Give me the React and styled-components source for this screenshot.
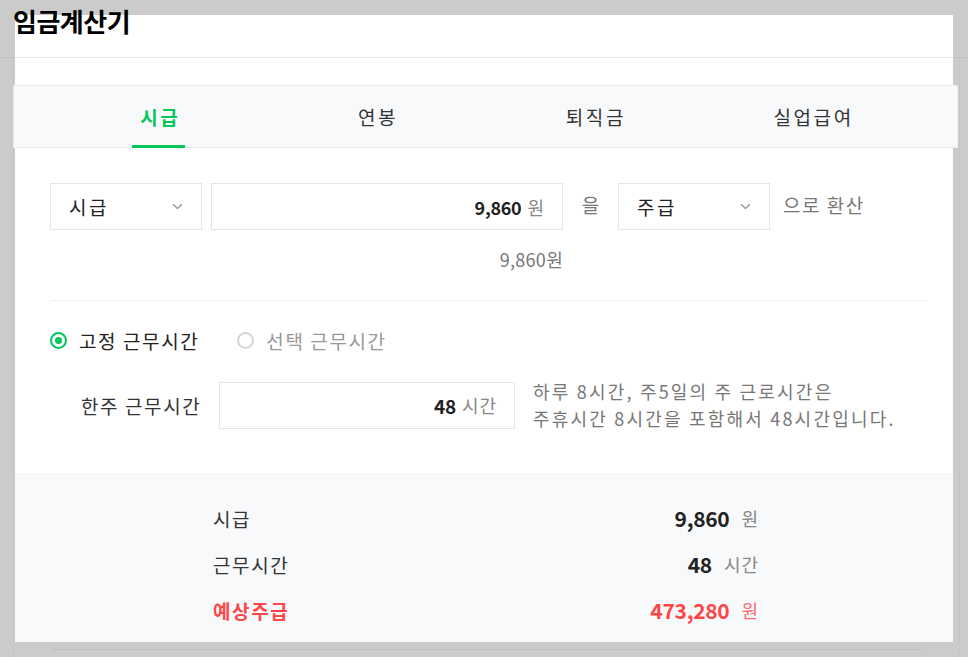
import React from "react";
import styled, { createGlobalStyle } from "styled-components";

const Global = createGlobalStyle`
  html, body { margin: 0; padding: 0; }
  body {
    background: #cbcbcb;
    font-family: "Noto Sans CJK KR", "Noto Sans", sans-serif;
    color: #222;
  }
  * { box-sizing: border-box; }
`;

const Page = styled.div`
  position: relative;
  width: 968px;
  height: 657px;
  overflow: hidden;
  background: #cbcbcb;
`;

const PageHeader = styled.header`
  height: 58px;
  border-bottom: 1px solid #bfbfbf;
`;

const PageBody = styled.div`
  margin: 0 8px 0 13px;
  height: 599px;
  border-left: 1px solid #c5c5c5;
  border-right: 1px solid #c5c5c5;
  display: flex;
  flex-direction: column;
  justify-content: flex-end;
  padding: 0 38px 7px 38px;
`;

const PageRule = styled.div`
  height: 1px;
  background: #bcbcbc;
`;

const Title = styled.h1`
  position: absolute;
  z-index: 3;
  left: 13px;
  top: 3px;
  margin: 0;
  font-size: 26px;
  font-weight: 700;
  color: #000;
  letter-spacing: -0.5px;
  line-height: 36px;
`;

const Modal = styled.section`
  position: absolute;
  z-index: 2;
  left: 15px;
  top: 15px;
  width: 938px;
  height: 627px;
  background: #fff;
  display: flex;
  flex-direction: column;
`;

const ModalTop = styled.div`
  height: 43px;
  border-bottom: 1px solid #ebebeb;
  flex: none;
`;

const TabBox = styled.nav`
  margin: 27px -5px 0 -2px;
  height: 63px;
  background: #f8f9fb;
  border: 1px solid #e9ebef;
  display: grid;
  grid-template-columns: repeat(4, 1fr);
  padding: 0 36px 0 36px;
  flex: none;
`;

const Tab = styled.div`
  display: flex;
  align-items: center;
  justify-content: center;
  position: relative;
  font-size: 19px;
  letter-spacing: 2.6px;
  color: ${(p) => (p.$active ? "#03c75a" : "#333")};
  font-weight: ${(p) => (p.$active ? 700 : 400)};
`;

const TabLabel = styled.span`
  position: relative;
  padding: 0 5px 0 8px;
  line-height: 61px;
  &::after {
    content: "";
    display: ${(p) => (p.$active ? "block" : "none")};
    position: absolute;
    left: 0;
    right: 0;
    bottom: -1px;
    height: 3px;
    background: #03c75a;
  }
`;

const Form = styled.div`
  padding: 35px 26px 0 35px;
  flex: 1;
`;

const Row = styled.div`
  display: flex;
  align-items: center;
`;

const SelectBox = styled.div`
  width: 152px;
  height: 47px;
  border: 1px solid #e2e5ea;
  display: flex;
  align-items: center;
  justify-content: space-between;
  padding: 0 18px 0 18px;
  font-size: 19px;
  letter-spacing: 2.5px;
  color: #222;
`;

const AmountBox = styled.div`
  width: ${(p) => p.$w}px;
  height: ${(p) => p.$h}px;
  margin-left: ${(p) => p.$ml || 0}px;
  border: 1px solid #e2e5ea;
  display: flex;
  align-items: center;
  justify-content: flex-end;
  padding: 0 17px;
  gap: 6px;
`;

const Num = styled.span`
  font-size: ${(p) => p.$size || 18}px;
  font-weight: 700;
  color: ${(p) => p.$color || "#222"};
  letter-spacing: -0.3px;
`;

const Unit = styled.span`
  font-size: 18px;
  letter-spacing: 1px;
  color: ${(p) => p.$color || "#888"};
`;

const Josa = styled.span`
  width: 55px;
  text-align: center;
  font-size: 19px;
  color: #777;
  align-self: flex-start;
  padding-top: 8px;
`;

const Trail = styled.span`
  margin-left: 13px;
  font-size: 19px;
  letter-spacing: 1.5px;
  color: #777;
  align-self: flex-start;
  padding-top: 8px;
`;

const Converted = styled.div`
  width: 513px;
  margin-top: 16px;
  text-align: right;
  font-size: 18px;
  line-height: 26px;
  color: #777;
  letter-spacing: 0.3px;
`;

const Divider = styled.hr`
  margin: 28px 0 0 0;
  border: 0;
  height: 1px;
  background: #eeeff1;
`;

const RadioRow = styled.div`
  margin-top: 26px;
  display: flex;
  align-items: center;
  height: 26px;
`;

const RadioItem = styled.label`
  display: flex;
  align-items: center;
  gap: 12px;
  margin-right: 38px;
  font-size: 19px;
  letter-spacing: 1.6px;
  color: ${(p) => (p.$on ? "#222" : "#999")};
`;

const RadioDot = styled.span`
  width: 17px;
  height: 17px;
  border-radius: 50%;
  border: 2px solid ${(p) => (p.$on ? "#03c75a" : "#d6d6d6")};
  display: flex;
  align-items: center;
  justify-content: center;
  &::after {
    content: "";
    width: 7px;
    height: 7px;
    border-radius: 50%;
    background: ${(p) => (p.$on ? "#03c75a" : "transparent")};
  }
`;

const HoursRow = styled.div`
  margin-top: 25px;
  display: flex;
  align-items: center;
  padding-left: 31px;
`;

const FieldLabel = styled.span`
  width: 138px;
  font-size: 19px;
  letter-spacing: 1.6px;
  color: #333;
`;

const Desc = styled.p`
  margin: 0 0 0 18px;
  font-size: 18px;
  line-height: 27px;
  color: #777;
  letter-spacing: 2.2px;
`;

const Results = styled.div`
  flex: none;
  height: 168px;
  background: #f8f9fb;
  border-top: 1px solid #eceef2;
  padding: 20px 0 0 198px;
`;

const ResultRow = styled.div`
  width: 546px;
  height: 46px;
  display: flex;
  align-items: center;
  justify-content: space-between;
`;

const ResultLabel = styled.span`
  font-size: 19px;
  letter-spacing: 1.6px;
  color: ${(p) => (p.$red ? "#ff4646" : "#333")};
  font-weight: ${(p) => (p.$red ? 700 : 400)};
`;

const ResultValue = styled.span`
  display: flex;
  align-items: center;
  gap: 12px;
`;

const Chevron = () => (
  <svg width="11" height="7" viewBox="0 0 11 7">
    <polyline points="1,1.2 5.5,5.5 10,1.2" fill="none" stroke="#9a9a9a" strokeWidth="1.4" />
  </svg>
);

export default function App() {
  const tabs = ["시급", "연봉", "퇴직금", "실업급여"];
  return (
    <>
      <Global />
      <Page>
        <PageHeader />
        <PageBody>
          <PageRule />
        </PageBody>
        <Title>임금계산기</Title>
        <Modal>
          <ModalTop />
          <TabBox>
            {tabs.map((t, i) => (
              <Tab key={t} $active={i === 0}>
                <TabLabel $active={i === 0}>{t}</TabLabel>
              </Tab>
            ))}
          </TabBox>
          <Form>
            <Row>
              <SelectBox>
                시급
                <Chevron />
              </SelectBox>
              <AmountBox $w={352} $h={47} $ml={9}>
                <Num>9,860</Num>
                <Unit>원</Unit>
              </AmountBox>
              <Josa>을</Josa>
              <SelectBox>
                주급
                <Chevron />
              </SelectBox>
              <Trail>으로 환산</Trail>
            </Row>
            <Converted>9,860원</Converted>
            <Divider />
            <RadioRow>
              <RadioItem $on>
                <RadioDot $on />
                고정 근무시간
              </RadioItem>
              <RadioItem>
                <RadioDot />
                선택 근무시간
              </RadioItem>
            </RadioRow>
            <HoursRow>
              <FieldLabel>한주 근무시간</FieldLabel>
              <AmountBox $w={296} $h={47}>
                <Num $size={19}>48</Num>
                <Unit>시간</Unit>
              </AmountBox>
              <Desc>
                하루 8시간, 주5일의 주 근로시간은
                <br />
                주휴시간 8시간을 포함해서 48시간입니다.
              </Desc>
            </HoursRow>
          </Form>
          <Results>
            <ResultRow>
              <ResultLabel>시급</ResultLabel>
              <ResultValue>
                <Num $size={21}>9,860</Num>
                <Unit>원</Unit>
              </ResultValue>
            </ResultRow>
            <ResultRow>
              <ResultLabel>근무시간</ResultLabel>
              <ResultValue>
                <Num $size={21}>48</Num>
                <Unit>시간</Unit>
              </ResultValue>
            </ResultRow>
            <ResultRow>
              <ResultLabel $red>예상주급</ResultLabel>
              <ResultValue>
                <Num $size={21} $color="#ff4646">473,280</Num>
                <Unit $color="#ff6a6a">원</Unit>
              </ResultValue>
            </ResultRow>
          </Results>
        </Modal>
      </Page>
    </>
  );
}
